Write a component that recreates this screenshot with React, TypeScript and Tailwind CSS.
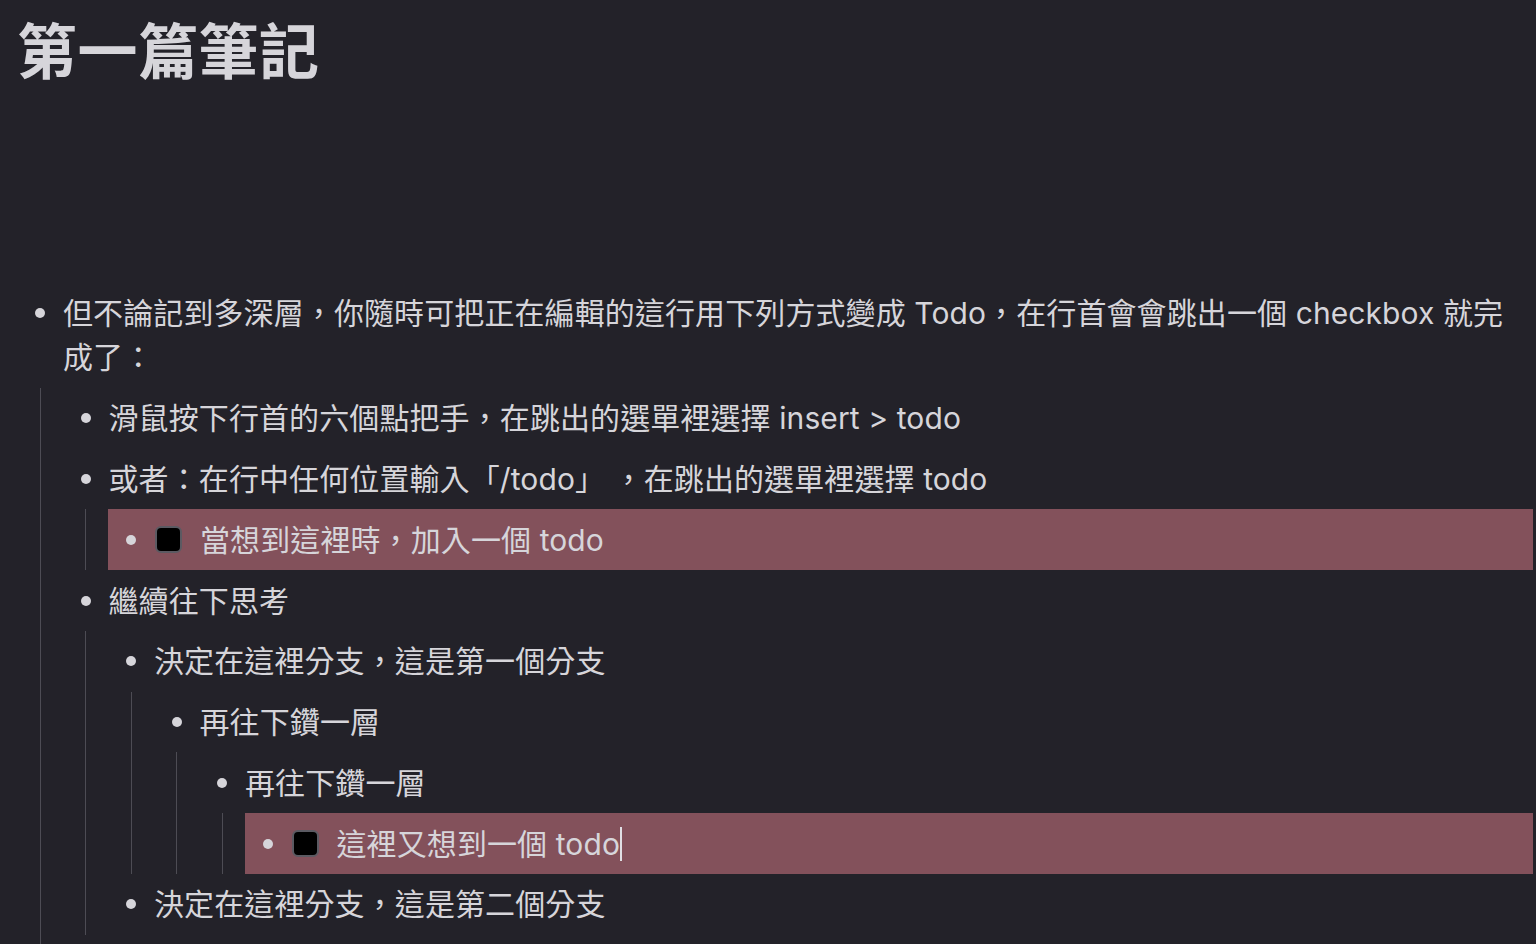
import React from "react";

type Node = {
  text: React.ReactNode;
  hl?: boolean;
  todo?: boolean;
  cursor?: boolean;
  children?: Node[];
};

const tree: Node[] = [
  {
    text: (
      <>
        但不論記到多深層，你隨時可把正在編輯的這行用下列方式變成 Todo，在行首會會跳出一個 checkbox 就完
        <br />
        成了：
      </>
    ),
    children: [
      { text: "滑鼠按下行首的六個點把手，在跳出的選單裡選擇 insert > todo" },
      {
        text: "或者：在行中任何位置輸入「/todo」 ，在跳出的選單裡選擇 todo",
        children: [{ text: "當想到這裡時，加入一個 todo", hl: true, todo: true }],
      },
      {
        text: "繼續往下思考",
        children: [
          {
            text: "決定在這裡分支，這是第一個分支",
            children: [
              {
                text: "再往下鑽一層",
                children: [
                  {
                    text: "再往下鑽一層",
                    children: [{ text: "這裡又想到一個 todo", hl: true, todo: true, cursor: true }],
                  },
                ],
              },
            ],
          },
          { text: "決定在這裡分支，這是第二個分支" },
        ],
      },
    ],
  },
];

function Item({ node, top }: { node: Node; top?: boolean }) {
  return (
    <div>
      <div className={`flex items-start py-[8.4px] ${node.hl ? "bg-[#83515b]" : ""}`}>
        <div className="w-[46px] h-[44px] shrink-0 flex items-center justify-center">
          <div className="w-[10px] h-[10px] rounded-full bg-[#d6d5da]" />
        </div>
        {node.todo && (
          <div className="h-[44px] flex items-center shrink-0 ml-[1px] mr-[18px]">
            <div className="w-[27px] h-[27px] rounded-[6px] bg-black border-2 border-[#5b5a62]" />
          </div>
        )}
        <div className="leading-[44px] text-[30px] text-[#d6d5da] tracking-[0.1px]">
          {node.text}
          {node.cursor && (
            <span className="inline-block w-[2px] h-[34px] bg-[#e0dfe4] align-middle -mt-[4px]" />
          )}
        </div>
      </div>
      {node.children && (
        <div className={`ml-[22.5px] border-l border-[#4d4c54] pl-[22px] ${top ? "pb-[12px]" : ""}`}>
          {node.children.map((c, i) => (
            <Item key={i} node={c} />
          ))}
        </div>
      )}
    </div>
  );
}

export default function App() {
  return (
    <div
      className="w-[1536px] h-[944px] overflow-hidden bg-[#232229] pl-[17px] pr-[3px]"
      style={{ fontFamily: '"Inter", "Noto Sans CJK TC", sans-serif' }}
    >
      <h1 className="pt-[16px] text-[60px] leading-[72px] font-bold text-[#d6d5da] tracking-[0.5px]">
        第一篇筆記
      </h1>
      <div className="mt-[195px]">
        {tree.map((n, i) => (
          <Item key={i} node={n} top />
        ))}
      </div>
    </div>
  );
}
